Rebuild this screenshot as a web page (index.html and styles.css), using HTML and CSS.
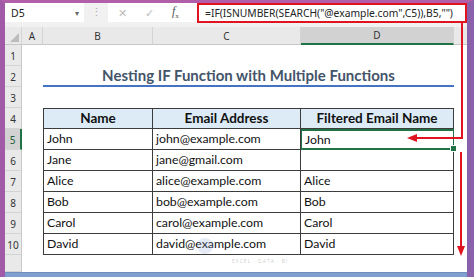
FILE: index.html
```html
<!DOCTYPE html>
<html lang="en">
<head>
  <meta charset="UTF-8">
  <title>Nesting IF Function with Multiple Functions</title>
  <link rel="stylesheet" href="styles.css">
</head>
<body>
  <div class="frame">
    <div class="formula-bar">
      <div class="namebox">D5<span class="drop">&#9662;</span></div>
      <div class="grip">&#8942;</div>
      <div class="buttons">
        <span class="btn-x">&#10005;</span>
        <span class="btn-ok">&#10003;</span>
        <span class="btn-fx"><i>f</i><sub>x</sub></span>
      </div>
      <div class="formula">=IF(ISNUMBER(SEARCH("@example.com",C5)),B5,"")</div>
    </div>

    <div class="sheet">
      <div class="row colhead">
        <div class="corner"><span class="tri"></span></div>
        <div class="ch">A</div>
        <div class="ch">B</div>
        <div class="ch">C</div>
        <div class="ch sel">D</div>
        <div class="ch last"></div>
      </div>

      <div class="row"><div class="rh">1</div><div></div><div></div><div></div><div></div><div></div></div>
      <div class="row">
        <div class="rh">2</div><div></div>
        <div class="title">Nesting IF Function with Multiple Functions</div>
        <div></div>
      </div>
      <div class="row"><div class="rh">3</div><div></div><div></div><div></div><div></div><div></div></div>
      <div class="row">
        <div class="rh">4</div><div></div>
        <div class="th first">Name</div>
        <div class="th">Email Address</div>
        <div class="th">Filtered Email Name</div>
        <div></div>
      </div>
      <div class="row">
        <div class="rh active">5</div><div></div>
        <div class="td first">John</div>
        <div class="td">john@example.com</div>
        <div class="td current">John<span class="handle"></span></div>
        <div></div>
      </div>
      <div class="row">
        <div class="rh">6</div><div></div>
        <div class="td first">Jane</div>
        <div class="td">jane@gmail.com</div>
        <div class="td"></div>
        <div></div>
      </div>
      <div class="row">
        <div class="rh">7</div><div></div>
        <div class="td first">Alice</div>
        <div class="td">alice@example.com</div>
        <div class="td">Alice</div>
        <div></div>
      </div>
      <div class="row">
        <div class="rh">8</div><div></div>
        <div class="td first">Bob</div>
        <div class="td">bob@example.com</div>
        <div class="td">Bob</div>
        <div></div>
      </div>
      <div class="row">
        <div class="rh">9</div><div></div>
        <div class="td first">Carol</div>
        <div class="td">carol@example.com</div>
        <div class="td">Carol</div>
        <div></div>
      </div>
      <div class="row">
        <div class="rh">10</div><div></div>
        <div class="td first">David</div>
        <div class="td">david@example.com</div>
        <div class="td">David</div>
        <div></div>
      </div>
      <div class="row short"><div class="rh"></div><div></div><div></div><div></div><div></div><div></div></div>
    </div>
    <div class="status"></div>

    <div class="watermark">EXCEL · DATA · BI</div>

    <svg class="arrows" width="474" height="277" viewBox="0 0 474 277">
      <circle cx="205" cy="246" r="8" fill="#8aa6d6" opacity="0.22"/>
      <path d="M462 23 V138 H414" fill="none" stroke="#e0141e" stroke-width="2"/>
      <path d="M407 138 L417 134 L417 142 Z" fill="#e0141e"/>
      <path d="M461 152 V248" fill="none" stroke="#e0141e" stroke-width="2"/>
      <path d="M461 256 L457 246 L465 246 Z" fill="#e0141e"/>
    </svg>
  </div>
</body>
</html>
```

FILE: styles.css
```css
html, body {
  margin: 0;
  padding: 0;
  background: #a45ba7;
}

.frame {
  position: relative;
  width: 474px;
  height: 277px;
  box-sizing: border-box;
  border-top: 3px solid #b05fa8;
  border-left: 5px solid #a15aa8;
  border-right: 7px solid #8a62ac;
  background: #f1f1f1;
  display: flex;
  flex-direction: column;
  overflow: hidden;
}

/* formula bar */
.formula-bar {
  display: flex;
  height: 19px;
  margin-bottom: 5px;
  font-family: "Noto Sans", sans-serif;
  font-size: 10.5px;
  color: #222;
}

.namebox {
  width: 79px;
  background: #fff;
  display: flex;
  align-items: center;
  justify-content: space-between;
  padding: 0 5px 0 6px;
  box-sizing: border-box;
}

.drop {
  font-size: 8px;
  color: #666;
}

.grip {
  width: 24px;
  text-align: center;
  line-height: 19px;
  color: #aaa;
}

.buttons {
  width: 89px;
  background: #fff;
  display: flex;
  align-items: center;
  gap: 18px;
  padding-left: 10px;
  box-sizing: border-box;
  color: #bbb;
  font-size: 11px;
}

.btn-fx {
  color: #555;
  font-family: "Liberation Serif", serif;
  font-size: 12px;
}

.btn-fx sub {
  font-size: 7px;
}

.formula {
  flex: 1;
  background: #fff;
  border: 2px solid #e0141e;
  height: 20px;
  box-sizing: border-box;
  padding-left: 6px;
  line-height: 16px;
  font-size: 10.3px;
  white-space: nowrap;
}

/* sheet */
.sheet {
  background: #fff;
  font-family: Lato, "Open Sans", sans-serif;
}

.row {
  display: grid;
  grid-template-columns: 17px 21px 110px 148px 153px 1fr;
  height: 21px;
}

.row.short {
  height: 17px;
}

.colhead {
  height: 18px;
  background: #e9e9e9;
  font-family: "Noto Sans", sans-serif;
  font-size: 10px;
  color: #333;
}

.corner {
  position: relative;
  border-right: 1px solid #d4d4d4;
  border-bottom: 1px solid #c8c8c8;
}

.tri {
  position: absolute;
  right: 2px;
  bottom: 2px;
  width: 0;
  height: 0;
  border-left: 9px solid transparent;
  border-bottom: 9px solid #bcbcbc;
}

.ch {
  display: flex;
  align-items: center;
  justify-content: center;
  border-right: 1px solid #d4d4d4;
  border-bottom: 1px solid #c8c8c8;
}

.ch.sel {
  background: #d2d2d2;
  border-bottom: 2px solid #217346;
}

.ch.last {
  border-right: none;
}

.rh {
  background: #e9e9e9;
  border-right: 1px solid #c8c8c8;
  border-bottom: 1px solid #d4d4d4;
  box-sizing: border-box;
  font-family: "Noto Sans", sans-serif;
  font-size: 10px;
  color: #333;
  display: flex;
  align-items: flex-end;
  justify-content: center;
  padding-bottom: 2px;
}

.rh.active {
  background: #d2d2d2;
  border-right: 2px solid #217346;
  color: #1f5c38;
}

.title {
  grid-column: span 3;
  text-align: center;
  font-weight: bold;
  font-size: 15px;
  color: #44546a;
  border-bottom: 2px solid #4472c4;
  line-height: 19px;
  white-space: nowrap;
}

.th, .td {
  box-sizing: border-box;
  border-right: 1px solid #3c3c3c;
  border-bottom: 1px solid #3c3c3c;
  white-space: nowrap;
  overflow: hidden;
}

.first {
  border-left: 1px solid #3c3c3c;
}

.th {
  background: #ddebf7;
  border-top: 1px solid #3c3c3c;
  font-weight: bold;
  font-size: 13.5px;
  text-align: center;
  line-height: 19px;
  color: #111;
}

.td {
  font-size: 12.3px;
  line-height: 20px;
  padding-left: 3px;
  color: #111;
}

.td.current {
  position: relative;
  overflow: visible;
  border: 1px solid #217346;
  border-top: 2px solid #217346;
  border-bottom: 2px solid #217346;
  line-height: 17px;
}

.handle {
  position: absolute;
  right: -4px;
  bottom: -4px;
  width: 5px;
  height: 5px;
  background: #217346;
  border: 1px solid #fff;
}

.status {
  flex: 1;
  background: #7f9fcf;
  border-top: 1px solid #6f8fc0;
}

.watermark {
  position: absolute;
  left: 227px;
  top: 255px;
  font-family: "Open Sans", sans-serif;
  font-size: 5px;
  letter-spacing: 1px;
  color: rgba(120, 120, 120, 0.4);
  pointer-events: none;
}

.arrows {
  position: absolute;
  left: -5px;
  top: -3px;
  pointer-events: none;
}
```
